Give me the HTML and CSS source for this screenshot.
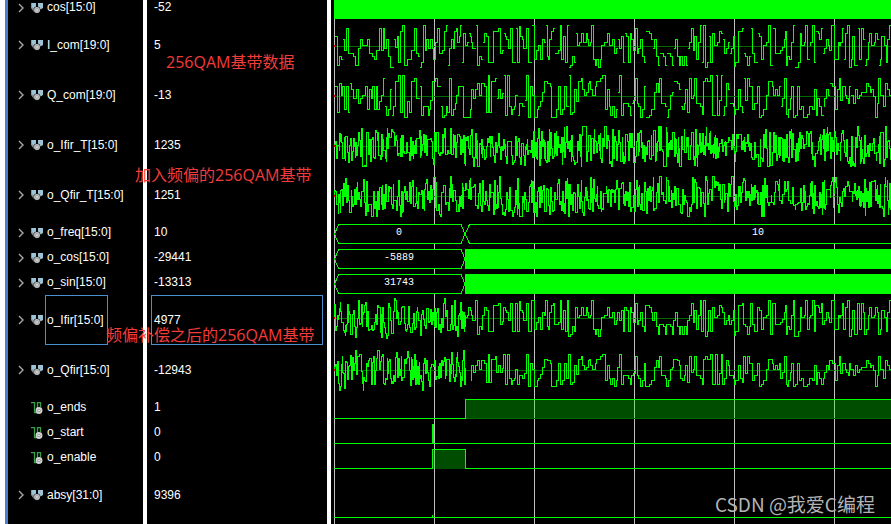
FILE: index.html
```html
<!DOCTYPE html>
<html lang="zh-CN">
<head>
<meta charset="utf-8">
<title>Waveform viewer</title>
<link rel="stylesheet" href="styles.css">
</head>
<body>
<svg class="defs" aria-hidden="true">
  <symbol id="chevron" viewBox="0 0 6 10"><path d="M1 1 5 5 1 9" fill="none" stroke="#a8a8a8" stroke-width="1.4"/></symbol>
  <symbol id="bus" viewBox="0 0 12 12">
    <path d="M0 1h5v4.5L3 7 0 5z" fill="#9cc4d6"/>
    <path d="M0 1h1v4l2 2v3L0 6z" fill="#8b979c"/>
    <path d="M7 1h5v5L9.500 7.500 7 5z" fill="#9cc4d6"/>
    <circle cx="6" cy="8" r="3.400" fill="#10181b"/>
    <circle cx="6" cy="8" r="2.200" fill="#777" stroke="#c4c4c4" stroke-width="1.500"/>
    <circle cx="6" cy="8" r="1" fill="#e8e8e8"/>
  </symbol>
  <symbol id="bit" viewBox="0 0 12 12">
    <path d="M0 .5h3.5v10H6M6.5 7V.5h3V5" fill="none" stroke="#36a148" stroke-width="1.3"/>
    <circle cx="8" cy="8.5" r="2.5" fill="#777" stroke="#d0d0d0" stroke-width="1.9"/>
    <circle cx="8" cy="8.5" r="1" fill="#eee"/>
  </symbol>
</svg>
<main class="viewer">
  <ul class="names" id="names"></ul>
  <ul class="values" id="values"></ul>
  <section class="waves"><div class="grid" id="waves"></div></section>
  <p class="note note-data">256QAM基带数据</p>
  <p class="note note-offset">加入频偏的256QAM基带</p>
  <p class="note note-fixed">频偏补偿之后的256QAM基带</p>
  <p class="credit">CSDN @我爱C编程</p>
</main>
<script src="waves.js"></script>
</body>
</html>
```
FILE: styles.css
```css
* { box-sizing: border-box; }
body {
  margin: 0;
  background: #fff;
  color: #fff;
  font: 12px/14px "Liberation Sans", Arial, sans-serif;
}
.defs { position: absolute; width: 0; height: 0; }
.viewer {
  position: relative;
  display: grid;
  grid-template-columns: 138px 180px minmax(0, 1fr);
  column-gap: 4px;
  height: 100vh;
  padding-left: 5px;
  overflow: hidden;
}
.names, .values, .waves {
  margin: 0;
  padding: 0;
  list-style: none;
  background: #000;
  overflow: hidden;
}
.names { border-left: 3px solid #4b7fd1; }
.row { display: flex; align-items: center; height: 25px; }
.tall { height: 50px; }
.row:first-child { margin-top: -5px; }
.names .row { padding-left: 10px; }
.toggle {
  display: flex;
  width: 6px;
  margin-right: 7px;
  padding: 0;
  border: 0;
  background: none;
}
.toggle svg { width: 6px; height: 10px; }
.blank { width: 13px; }
.kind { width: 12px; height: 12px; margin-right: 2px; }
.name, .value {
  display: flex;
  align-items: center;
  height: 100%;
  padding: 0 3px 1px 1px;
  border: 1px solid transparent;
}
.values .row { padding: 0 4px; }
.value { flex: 1; padding-left: 2px; }
.selected { border-color: #4a90d0; }
.waves { padding-left: 3px; }
.grid {
  display: flow-root;
  height: 100%;
  background: repeating-linear-gradient(90deg, #c0c0c0 0 1px, transparent 1px 100px);
}
.wave { width: 100%; height: 100%; overflow: visible; shape-rendering: crispEdges; }
.trace { fill: none; stroke: #0f0; stroke-width: 1; }
.axis { fill: none; stroke: #006a00; stroke-width: 1; }
.box { fill: #000; stroke: #0f0; stroke-width: 1; }
.solid { fill: #0f0; }
.high { fill: #0f0; fill-opacity: .3; }
.origin { fill: #e00; }
.wave text {
  fill: #fff;
  font: 10px "Liberation Mono", monospace;
  text-anchor: middle;
}
.note, .credit { position: absolute; margin: 0; white-space: nowrap; }
.note {
  color: #f33b3b;
  font: 16px/20px "Open Sans", "Noto Sans CJK SC", sans-serif;
}
.note-data { left: 166px; top: 52px; }
.note-offset { left: 135px; top: 165px; }
.note-fixed { left: 106px; top: 325px; }
.credit {
  right: 16px;
  bottom: 8px;
  color: #b4b4b4;
  font: 19px/24px "Noto Sans CJK SC", sans-serif;
}
```
FILE: waves.js
```js
// Step data: "position:level" pairs in thirds of a pixel; "/" lifts the pen.
const I = `28:109 37:196 43:169 50:178 / 52:118 58:152 64:84 70:160 85:169 91:196 100:146 106:118 112:135 127:118 133:160 142:169 148:178 154:152 163:84 169:152 175:84 178:146 184:118 190:169 196:203 / 205:118 211:143 217:109 220:187 226:93 232:75 238:196 247:178 259:152 268:84 274:160 281:170 / 283:203 290:187 295:75 301:152 304:118 310:146 316:118 322:146 325:178 331:127 337:84 343:160 352:152 358:93 364:75 / 367:196 373:146 379:118 385:146 388:93 394:84 397:127 403:109 406:75 / 409:187 415:101 421:136 427:127 / 430:101 436:109 439:127 442:146 / 451:75 457:196 463:169 469:178 / 472:127 478:101 484:109 490:187 499:187 505:93 520:84 526:160 532:150 / 535:101 541:109 544:118 550:146 556:84 562:187 / 571:84 577:187 583:80 586:109 592:118 595:146 604:84 610:187 / 619:75 628:178 634:152 640:135 646:178 652:118 658:127 / 661:75 667:169 670:178 673:118 679:93 685:84 / 688:160 700:152 706:75 709:178 715:109 721:187 727:75 / 730:203 736:196 742:169 748:187 / 751:101 757:136 763:127 769:101 775:127 784:101 787:118 790:136 796:127 799:75 805:178 811:196 814:178 820:203 826:178 829:135 838:127
841:127 847:101 853:135 862:118 868:160 874:146 / 877:118 883:146 889:109 895:187 / 898:101 904:109 910:187 916:101 919:118 925:152 931:84 937:160 940:146 946:118 952:169 958:187 / 960:94 972:101 979:118 / 982:146 988:118 994:169 1000:196 / 1003:160 1015:169 1021:196 / 1024:160 1036:169 1042:196 / 1045:146 1051:118 1057:169 1063:196 1066:169 1072:196 1078:169 1084:196 / 1087:146 1093:127 1099:84 1105:152 1108:109 1114:178 1120:127 1126:75 / 1129:187 1135:75 1141:203 1147:187 / 1150:109 1156:187 1162:101 1168:136 1177:127 1183:93 1189:100 / 1192:118 1198:160 1204:146 1210:127 / 1213:160 1219:146 1225:109 1228:200 1231:187 1240:93 1252:84 / 1255:160 1261:169 1267:196 1273:169 / 1276:84 1282:160 1288:187 / 1297:101 1303:109 1309:178 1315:136 1324:127 1330:75 1336:196 / 1342:84 1351:160 1366:152 1372:143 1378:118 1381:93 1384:196 1387:169 1393:178 1399:127 1405:75 / 1408:203 1420:187 1426:101 1429:136 1438:127 1441:75 1447:178 / 1453:136 1456:127 1462:75 1468:187 / 1471:93 1480:101 1483:118 1489:84 / 1492:160 1498:146 1504:118 1510:135 1513:152 1519:75 1528:178 1540:127 1543:136 1546:127 1552:84 / 1555:178 1561:101 1567:75 1573:203 1579:178 1582:109 1588:196 / 1597:84 1604:178 1609:84 1615:118 / 1618:196 1624:178 1630:127 1633:101 1639:136 1648:127 1651:101 1657:118 / 1660:196 1666:178 1669:109 1678:135 1684:187 1687:118 1693:75 1698:75`;
const Q = `28:260 37:337 43:250 49:285 52:260 58:328 64:260 70:337 / 73:250 79:268 85:295 94:268 100:310 106:295 112:286 121:260 127:328 133:268 139:295 142:260 148:328 154:260 156:328 163:304 169:286 175:235 / 178:319 184:346 190:328 196:268 / 199:346 205:319 211:244 220:226 226:337 232:226 238:352 247:304 253:337 259:244 268:235 274:295 / 283:260 289:346 295:319 310:346 313:328 316:300 322:244 331:235 337:260 / 346:319 352:352 358:346 364:319 367:337 373:235 379:346 385:328 391:310 394:286 400:260 415:352 436:328 439:268 445:295 451:268 457:250 463:286 470:250 478:260 484:337 490:226 493:337 499:244 511:235 / 514:295 520:268 526:295 532:280 / 535:226 541:346 547:226 553:319 559:343 562:328 568:319 571:286 / 577:346 583:310 592:319 / 598:300 604:226 610:352 616:260 622:286 628:352 637:328 640:319 646:304 652:277 658:244 667:250 676:260 679:352 694:328 700:260 706:343 712:328 718:260 724:319 / 730:226 736:343 742:337 748:268 754:304 760:244 769:235 772:268 778:286 784:277 790:250 793:244 796:268 802:286 811:260 814:244 826:235 832:226
842:328 847:268 853:320 856:346 862:319 868:352 874:328 / 877:277 883:226 889:346 895:310 910:319 916:346 / 919:310 925:300 931:235 937:310 940:319 946:352 952:328 958:260 / 961:352 973:346 979:328 988:277 994:250 1000:277 1003:235 1009:310 1021:319 / 1024:352 1030:328 1036:286 1042:277 / 1045:244 1057:250 1063:268 / 1066:319 1072:328 1078:310 1081:268 1087:337 1093:235 1099:295 1105:286 1108:235 1114:310 1126:319 1132:343 1135:244 1141:235 1147:244 1156:226 1162:346 / 1171:226 1177:346 1183:300 1189:226 / 1192:346 1198:319 1204:250 1210:268 / 1213:310 1225:319 1228:343 1231:328 1240:268 1246:319 1252:337 / 1255:235 1261:300 1267:235 1273:260 1282:328 1288:310 1297:260 1303:352 1309:346 1315:328 1324:286 1330:244 1342:260 1345:286 1351:268 1357:286 1363:260 / 1366:319 1372:295 1378:235 1384:343 / 1387:352 1390:328 1396:295 1399:260 1405:352 1411:346 1417:260 1423:328 1429:319 1435:352 1447:343 1453:319 1462:328 1468:268 1474:346 1477:295 1483:319 1489:346 / 1495:319 1498:295 1504:268 1510:286 / 1513:250 1522:260 1531:328 1537:268 1543:235 1546:300 1552:260 1561:286 1564:295 1570:310 1573:260 / 1576:286 1585:310 1591:268 1597:295 1603:286 1609:277 1624:250 1630:260 1636:277 1639:268 1645:290 1651:352 1657:310 1660:235 1666:286 1675:319 1681:250 1687:268 1693:286 1698:286`;

const START = 98, TURN = 131, END = 3000;

function steps(data, mid, axis, scale, from, lift) {
  let d = "", down = false, lastX = 0;
  for (const token of data.split(/\s+/)) {
    if (token === "/") { if (lift) down = false; continue; }
    const [px, level] = token.split(":").map(Number);
    const x = Math.floor(px / 3) - 9 + 0.5;
    if (x < from) continue;
    const y = axis + Math.round((level - mid) * scale / 3) + 0.5;
    d += down ? `H${x}V${y}` : lastX ? `H${x}M${x} ${y}` : `M${x} ${y}`;
    down = true;
    lastX = x;
  }
  return `<path class="trace" d="${d}"/>`;
}

// Filtered signal: repeatable pseudo-random swings about the axis,
// with quiet and loud stretches.
function swings(seed, axis, until) {
  let s = seed, side = 1, y = 0, loud = 1, d = `M.5 ${axis}.5`;
  const rnd = () => (s = (s * 16807) % 2147483647) / 2147483647;
  for (let x = 0; x <= until; x++) {
    if (x % 9 === 0) loud = 0.75 + rnd() * 0.55;
    d += `H${x}.5`;
    if (rnd() < 0.1) continue;
    const turns = rnd() < 0.25 ? 2 : 1;
    for (let i = 0; i < turns; i++) {
      side = rnd() < 0.55 ? -side : side;
      const peak = rnd() < 0.12 ? 16 + rnd() * 4 : 2 + rnd() * 14;
      y = Math.round(side * peak * loud + y * 0.2);
      y = Math.max(-20, Math.min(20, y));
      d += `V${axis + y}.5`;
    }
  }
  return `<path class="trace" d="${d}"/>`;
}

const axis = y => `<path class="axis" d="M0 ${y}.5H${END}"/>`;
const origin = y => `<rect class="origin" x="0" y="${y - 1}" width="1" height="2"/>`;
const box = (text, end) => `<path class="box" d="M.5 14 4.5 4.5H${end - 4}L${end} 14 ${end - 4} 23.5H4.5z"/><text x="65" y="15">${text}</text>`;
const solid = x => `<rect class="solid" x="${x}" y="4" width="${END}" height="20"/>`;
const line = d => `<path class="trace" d="${d}"/>`;

const signals = [
  ["cos[15:0]", "-52", 0, solid(0)],
  ["I_com[19:0]", "5", 1, axis(26) + steps(I, 139, 26, 1, 0, true) + origin(26)],
  ["Q_com[19:0]", "-13", 1, axis(26) + steps(Q, 289, 26, 1, 0, true) + origin(26)],
  ["o_Ifir_T[15:0]", "1235", 1, axis(26) + swings(731, 26, 900) + origin(26)],
  ["o_Qfir_T[15:0]", "1251", 1, axis(26) + swings(9127, 26, 900) + origin(26)],
  ["o_freq[15:0]", "10", 0, box("0", TURN) + `<path class="box" d="M${END} 4.5H135.5L${TURN} 14 135.5 23.5H${END}"/><text x="424" y="15">10</text>`],
  ["o_cos[15:0]", "-29441", 0, box("-5889", TURN) + solid(TURN)],
  ["o_sin[15:0]", "-13313", 0, box("31743", TURN) + solid(TURN)],
  ["o_Ifir[15:0]", "4977", 1, axis(23) + swings(5113, 23, TURN) + steps(I, 139, 23, .84, TURN, false) + origin(23)],
  ["o_Qfir[15:0]", "-12943", 1, axis(25) + swings(40127, 25, TURN) + steps(Q, 289, 25, .76, TURN, false) + origin(25)],
  ["o_ends", "1", 0, `<rect class="high" x="${TURN}" y="4" width="${END}" height="20"/>` + axis(23) + line(`M0 23.5H${TURN}.5V4.5H${END}`)],
  ["o_start", "0", 0, line(`M0 23.5H${END}`) + `<rect class="solid" x="${START}" y="4" width="2" height="20"/>`],
  ["o_enable", "0", 0, `<rect class="high" x="${START}" y="4" width="33" height="20"/>` + line(`M0 23.5H${START}.5V4.5H${TURN}.5V23.5H${END}`)],
  ["absy[31:0]", "9396", 1, line(`M0 47.5H${END}M98.5 45V47`)]
];

let names = "", values = "", waves = "";
for (const [name, value, tall, drawing] of signals) {
  const row = tall ? "row tall" : "row";
  const picked = name === "o_Ifir[15:0]" ? " selected" : "";
  const isBus = name.includes("[");
  const toggle = isBus
    ? `<button class="toggle" aria-label="Expand ${name}"><svg><use href="#chevron"/></svg></button>`
    : `<span class="blank"></span>`;
  names += `<li class="${row}">${toggle}<svg class="kind"><use href="#${isBus ? "bus" : "bit"}"/></svg><span class="name${picked}">${name}</span></li>`;
  values += `<li class="${row}"><span class="value${picked}">${value}</span></li>`;
  waves += `<div class="${row}"><svg class="wave">${drawing}</svg></div>`;
}
document.getElementById("names").innerHTML = names;
document.getElementById("values").innerHTML = values;
document.getElementById("waves").innerHTML = waves;
```
